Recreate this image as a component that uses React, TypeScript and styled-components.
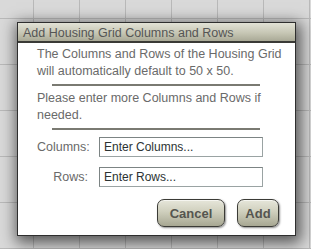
import React from 'react'
import styled, { createGlobalStyle } from 'styled-components'

const GlobalStyle = createGlobalStyle`
  html, body {
    margin: 0;
    padding: 0;
  }
  body {
    font-family: "Liberation Sans", Arial, sans-serif;
  }
`

const Canvas = styled.div`
  width: 311px;
  height: 249px;
  box-sizing: border-box;
  padding: 22px 15px 13px 17px;
  background-color: #d9d9d9;
  background-image:
    linear-gradient(to right, #b9b9b9 1px, transparent 1px),
    linear-gradient(to bottom, #b9b9b9 1px, transparent 1px);
  background-size: 46px 46px;
  background-position: 33px 0, 0 18px;
  overflow: hidden;
`

const Dialog = styled.div`
  width: 279px;
  height: 214px;
  box-sizing: border-box;
  background: #fff;
  border: 1px solid #2e2e2e;
  box-shadow: 2px 4px 14px 3px rgba(0, 0, 0, 0.6);
  display: flex;
  flex-direction: column;
`

const TitleBar = styled.div`
  height: 20px;
  box-sizing: border-box;
  padding: 2px 0 0 5px;
  background: linear-gradient(to bottom, #e2e2d6 0%, #c6c6b4 55%, #a9a996 100%);
  border-bottom: 2px solid #3a3a36;
  color: #555;
  font-size: 12.5px;
  line-height: 16px;
  white-space: nowrap;
`

const Body = styled.div`
  flex: 1;
  padding: 3px 16px 0 19px;
  display: flex;
  flex-direction: column;
`

const Message = styled.p`
  margin: 0;
  color: #6a6a6a;
  font-size: 12.5px;
  line-height: 17px;
  white-space: nowrap;
`

const Rule = styled.hr`
  margin: 4px 0 4px 15px;
  width: 208px;
  border: 0;
  border-top: 2px solid #7a7a72;
`

const Fields = styled.div`
  display: grid;
  grid-template-columns: 51px 164px;
  column-gap: 11px;
  row-gap: 10px;
  align-items: center;
  margin-top: 3px;
`

const Label = styled.label`
  text-align: right;
  color: #6a6a6a;
  font-size: 12.5px;
`

const Field = styled.input`
  height: 20px;
  box-sizing: border-box;
  border: 1px solid #9aa3a3;
  border-top-color: #7c8484;
  border-left-color: #7c8484;
  padding: 0 4px;
  font-family: "Liberation Sans", Arial, sans-serif;
  font-size: 12px;
  color: #333;
  outline: none;
  &::placeholder {
    color: #2c3333;
  }
`

const Actions = styled.div`
  display: flex;
  justify-content: flex-end;
  gap: 12px;
  margin-top: 12px;
`

const Button = styled.button<{ wide?: boolean }>`
  height: 28px;
  width: ${({ wide }) => (wide ? '68px' : '42px')};
  border: 1px solid #3b3b36;
  border-radius: 7px;
  background: linear-gradient(to bottom, #e6e6da 0%, #cfcfbd 45%, #a7a792 100%);
  box-shadow: 1px 1px 2px rgba(0, 0, 0, 0.45), inset 0 1px 0 rgba(255, 255, 255, 0.6);
  color: #55554f;
  font-family: "Liberation Sans", Arial, sans-serif;
  font-weight: bold;
  font-size: 13px;
  padding: 0;
  cursor: pointer;
`

export default function App() {
  return (
    <>
      <GlobalStyle />
      <Canvas>
        <Dialog>
          <TitleBar>Add Housing Grid Columns and Rows</TitleBar>
          <Body>
            <Message>
              The Columns and Rows of the Housing Grid<br />
              will automatically default to 50 x 50.
            </Message>
            <Rule />
            <Message>
              Please enter more Columns and Rows if<br />
              needed.
            </Message>
            <Rule />
            <Fields>
              <Label htmlFor="cols">Columns:</Label>
              <Field id="cols" placeholder="Enter Columns..." />
              <Label htmlFor="rows">Rows:</Label>
              <Field id="rows" placeholder="Enter Rows..." />
            </Fields>
            <Actions>
              <Button wide>Cancel</Button>
              <Button>Add</Button>
            </Actions>
          </Body>
        </Dialog>
      </Canvas>
    </>
  )
}
